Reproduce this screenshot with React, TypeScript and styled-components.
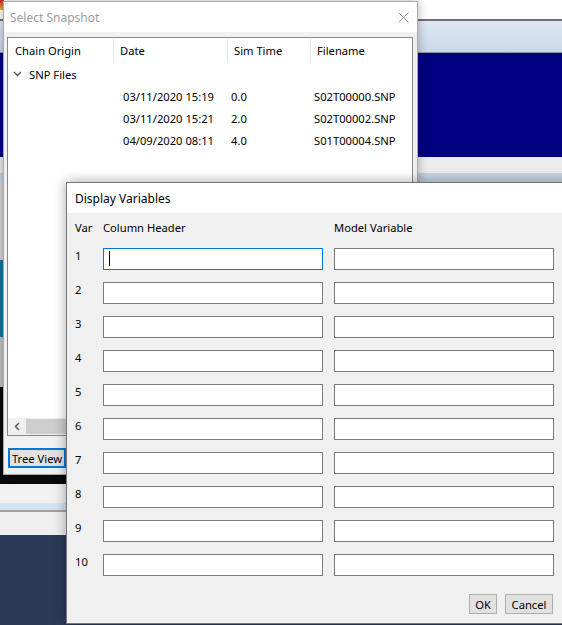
import styled, { createGlobalStyle } from "styled-components";

const GlobalStyle = createGlobalStyle`
  html, body {
    margin: 0;
    padding: 0;
  }
  body {
    font-family: "Noto Sans", "Open Sans", sans-serif;
    font-size: 11.2px;
    color: #000;
  }
`;

// the app behind the dialogs, drawn as horizontal bands
const bands: { h: number; bg: string }[] = [
  { h: 19, bg: "#ffffff" },
  { h: 2, bg: "#6f6f6f" },
  { h: 31, bg: "linear-gradient(#dfe9f5, #c9d7e7)" },
  { h: 1, bg: "#8b9bb0" },
  { h: 104, bg: "#000080" },
  { h: 16, bg: "#ececec" },
  { h: 9, bg: "#c8d4e3" },
  { h: 78, bg: "#d6d6d6" },
  { h: 77, bg: "#1572ac" },
  { h: 50, bg: "#c3c3c3" },
  { h: 97, bg: "#0b0b0b" },
  { h: 19, bg: "linear-gradient(90deg, #f2f2f2, #e6e6e6)" },
  { h: 7, bg: "#d5e2f0" },
  { h: 2, bg: "#9f9f9f" },
  { h: 23, bg: "#efefef" },
  { h: 90, bg: "#2b3a56" },
];

const files = [
  { date: "03/11/2020 15:19", time: "0.0", name: "S02T00000.SNP" },
  { date: "03/11/2020 15:21", time: "2.0", name: "S02T00002.SNP" },
  { date: "04/09/2020 08:11", time: "4.0", name: "S01T00004.SNP" },
];

const App = () => {
  return (
    <>
      <GlobalStyle />
      <Desktop>
        <BackApp>
          {bands.map((b, i) => (
            <Band key={i} $h={b.h} $bg={b.bg}>
              {i === 0 && <AppIcon />}
            </Band>
          ))}
        </BackApp>

        <SnapshotWindow>
          <TitleBar $pad={6}>
            <TitleText $inactive>Select Snapshot</TitleText>
            <CloseX width="11" height="11" viewBox="0 0 11 11">
              <path d="M0.5 0.5 L10.5 10.5 M10.5 0.5 L0.5 10.5" stroke="#9a9a9a" strokeWidth="1" />
            </CloseX>
          </TitleBar>
          <SnapshotBody>
            <ListBox>
              <GridRow $h={25}>
                <HeadCell>Chain Origin</HeadCell>
                <HeadCell>Date</HeadCell>
                <HeadCell>Sim Time</HeadCell>
                <HeadCell $last>Filename</HeadCell>
              </GridRow>
              <TreeRow>
                <svg width="9" height="6" viewBox="0 0 9 6">
                  <polyline points="1,1 4.5,4.5 8,1" fill="none" stroke="#5a5a5a" strokeWidth="1.4" />
                </svg>
                <span>SNP Files</span>
              </TreeRow>
              {files.map((f) => (
                <GridRow key={f.name} $h={22}>
                  <DataCell $pad={0} />
                  <DataCell $pad={9}>{f.date}</DataCell>
                  <DataCell $pad={3}>{f.time}</DataCell>
                  <DataCell $pad={3}>{f.name}</DataCell>
                </GridRow>
              ))}
              <Filler />
              <HScroll>
                <ScrollArrow>
                  <svg width="6" height="9" viewBox="0 0 6 9">
                    <polyline points="5,1 1.5,4.5 5,8" fill="none" stroke="#606060" strokeWidth="1.6" />
                  </svg>
                </ScrollArrow>
                <ScrollThumb />
              </HScroll>
            </ListBox>
            <SnapshotFooter>
              <WinButton $focused $w={58}>
                Tree View
              </WinButton>
            </SnapshotFooter>
          </SnapshotBody>
        </SnapshotWindow>

        <VarsWindow>
          <TitleBar $pad={8}>
            <TitleText>Display Variables</TitleText>
          </TitleBar>
          <VarsBody>
            <VarsGrid>
              <GridText>Var</GridText>
              <GridText>Column Header</GridText>
              <GridText>Model Variable</GridText>
              {Array.from({ length: 10 }, (_, i) => (
                <VarRow key={i}>
                  <GridText>{i + 1}</GridText>
                  <Field $active={i === 0} />
                  <Field />
                </VarRow>
              ))}
            </VarsGrid>
            <VarsFooter>
              <WinButton $w={28}>OK</WinButton>
              <WinButton $w={48}>Cancel</WinButton>
            </VarsFooter>
          </VarsBody>
        </VarsWindow>
      </Desktop>
    </>
  );
};

export default App;

const Desktop = styled.div`
  position: relative;
  width: 562px;
  height: 625px;
  overflow: hidden;
  background: #fff;
`;

const BackApp = styled.div`
  display: flex;
  flex-direction: column;
  height: 100%;
`;

const Band = styled.div<{ $h: number; $bg: string }>`
  height: ${({ $h }) => $h}px;
  flex-shrink: 0;
  background: ${({ $bg }) => $bg};
`;

const AppIcon = styled.div`
  width: 4px;
  height: 10px;
  background: linear-gradient(#c8281e, #e8c23a);
`;

const SnapshotWindow = styled.div`
  position: absolute;
  left: 3px;
  top: 1px;
  width: 415px;
  height: 474px;
  box-sizing: border-box;
  border: 1px solid #a9a9a9;
  background: #f0f0f0;
  display: flex;
  flex-direction: column;
  box-shadow: 0 0 10px rgba(0, 0, 0, 0.3);
`;

const VarsWindow = styled.div`
  position: absolute;
  left: 66px;
  top: 182px;
  width: 510px;
  height: 442px;
  box-sizing: border-box;
  border: 1px solid #777;
  background: #f0f0f0;
  display: flex;
  flex-direction: column;
  box-shadow: 0 0 12px rgba(0, 0, 0, 0.35);
`;

const TitleBar = styled.div<{ $pad: number }>`
  height: 30px;
  flex-shrink: 0;
  background: #fff;
  display: flex;
  align-items: center;
  padding-left: ${({ $pad }) => $pad}px;
  padding-right: 8px;
`;

const TitleText = styled.span<{ $inactive?: boolean }>`
  flex: 1;
  font-size: 12px;
  color: ${({ $inactive }) => ($inactive ? "#9c9c9c" : "#000")};
`;

const CloseX = styled.svg`
  display: block;
`;

const SnapshotBody = styled.div`
  flex: 1;
  display: flex;
  flex-direction: column;
  padding: 5px 4px 0 3px;
`;

const ListBox = styled.div`
  height: 399px;
  box-sizing: border-box;
  border: 1px solid #828790;
  background: #fff;
  display: flex;
  flex-direction: column;
`;

const GridRow = styled.div<{ $h: number }>`
  display: grid;
  grid-template-columns: 106px 114px 83px 1fr;
  height: ${({ $h }) => $h}px;
  align-items: center;
`;

const HeadCell = styled.div<{ $last?: boolean }>`
  height: 23px;
  display: flex;
  align-items: center;
  padding-left: 6px;
  border-right: ${({ $last }) => ($last ? "none" : "1px solid #e5e5e5")};
  &:first-child {
    padding-left: 7px;
  }
`;

const DataCell = styled.div<{ $pad: number }>`
  padding-left: ${({ $pad }) => $pad}px;
  white-space: nowrap;
`;

const TreeRow = styled.div`
  height: 22px;
  display: flex;
  align-items: center;
  gap: 7px;
  padding-left: 5px;
`;

const Filler = styled.div`
  flex: 1;
`;

const HScroll = styled.div`
  height: 17px;
  display: flex;
  background: #f0f0f0;
`;

const ScrollArrow = styled.div`
  width: 18px;
  display: flex;
  align-items: center;
  justify-content: center;
`;

const ScrollThumb = styled.div`
  width: 320px;
  margin: 1px 0;
  background: #cdcdcd;
`;

const SnapshotFooter = styled.div`
  display: flex;
  padding: 12px 0 0 1px;
`;

const WinButton = styled.div<{ $focused?: boolean; $w: number }>`
  width: ${({ $w }) => $w}px;
  height: 20px;
  box-sizing: border-box;
  display: flex;
  align-items: center;
  justify-content: center;
  background: #e1e1e1;
  border: ${({ $focused }) => ($focused ? "2px solid #0078d7" : "1px solid #adadad")};
  white-space: nowrap;
`;

const VarsBody = styled.div`
  flex: 1;
  padding: 7px 0 0 8px;
`;

const VarsGrid = styled.div`
  width: 479px;
  display: grid;
  grid-template-columns: 17px 220px 220px;
  column-gap: 11px;
  row-gap: 12px;
`;

const VarRow = styled.div`
  display: contents;
`;

const GridText = styled.div`
  line-height: 16px;
  white-space: nowrap;
`;

const Field = styled.div<{ $active?: boolean }>`
  position: relative;
  height: 22px;
  box-sizing: border-box;
  background: #fff;
  border: 1px solid ${({ $active }) => ($active ? "#0078d7" : "#7a7a7a")};
  &::before {
    content: "";
    display: ${({ $active }) => ($active ? "block" : "none")};
    position: absolute;
    left: 5px;
    top: 2px;
    width: 1px;
    height: 15px;
    background: #000;
  }
`;

const VarsFooter = styled.div`
  width: 478px;
  display: flex;
  justify-content: flex-end;
  gap: 8px;
  margin-top: 18px;
`;
